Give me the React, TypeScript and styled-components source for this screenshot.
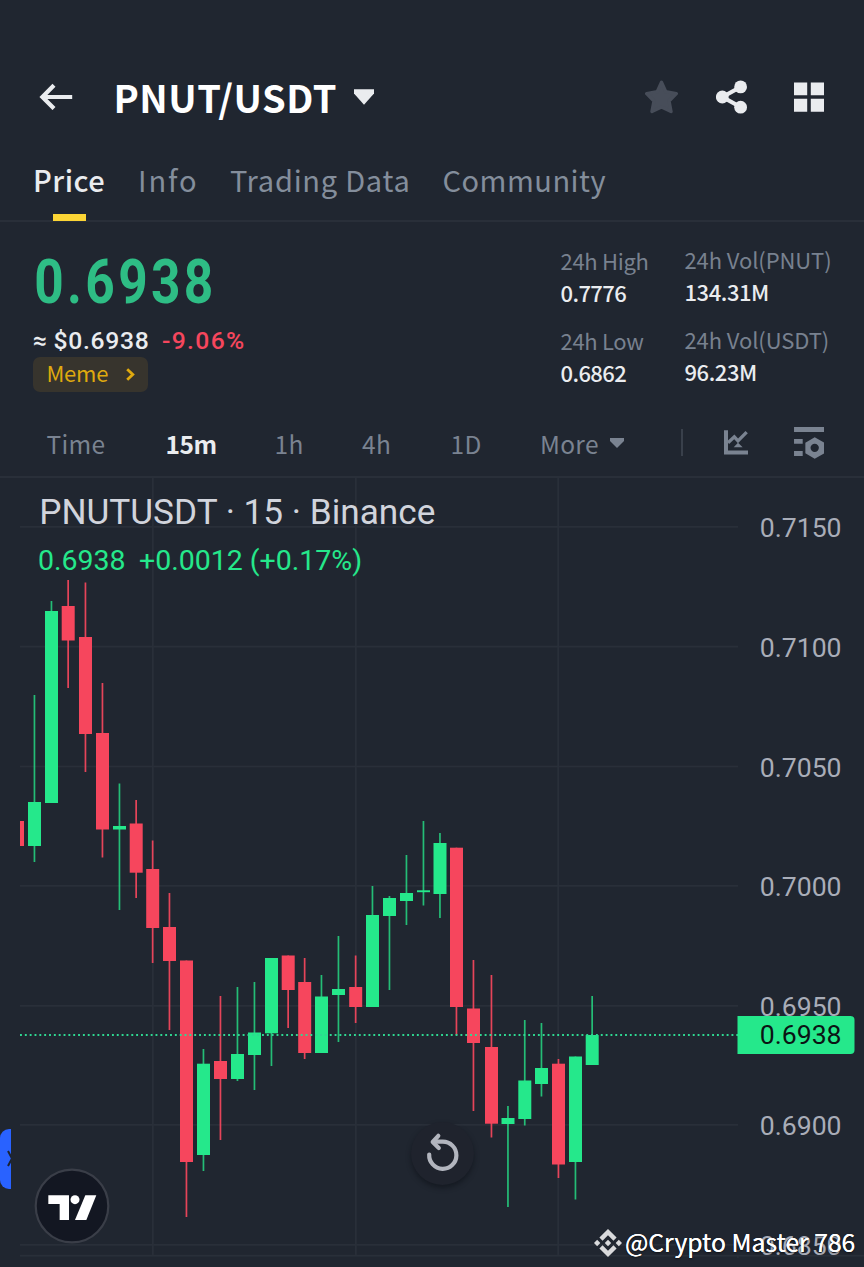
import React from 'react';
import styled, { createGlobalStyle } from 'styled-components';

const c = {
  bg: '#202630',
  line: '#292f39',
  text: '#eaecef',
  muted: '#848e9c',
  dim: '#7a8391',
  green: '#25e88b',
  red: '#f6465d',
};

const GlobalStyle = createGlobalStyle`
  * { box-sizing: border-box; }
  body { margin: 0; background: ${c.bg}; }
`;

const Page = styled.div`
  width: 864px;
  height: 1267px;
  overflow: hidden;
  position: relative;
  display: flex;
  flex-direction: column;
  background: ${c.bg};
  color: ${c.text};
  font-family: 'Noto Sans CJK SC', 'Noto Sans', sans-serif;
  white-space: nowrap;
  svg { display: block; flex: none; }
`;

const Header = styled.header`
  height: 132px;
  padding: 60px 40px 0 39px;
  display: flex;
  align-items: center;
`;

const Pair = styled.h1`
  margin: 0 0 0 40.5px;
  padding-top: 2px;
  width: 240.5px;
  font-size: 38px;
  line-height: 50px;
  font-weight: 700;
  letter-spacing: 0.5px;
  color: #fff;
`;

const Caret = styled.span`
  padding-top: 2px;
`;

const Actions = styled.div`
  margin-left: auto;
  display: flex;
  align-items: center;
  padding-top: 2px;
`;

const ActionIcon = styled.span<{ $after?: number }>`
  margin-right: ${(p) => p.$after ?? 0}px;
`;

const Tabs = styled.nav`
  height: 90px;
  padding: 27px 0 0 33px;
  display: grid;
  grid-template-columns: 105px 92px 212.5px auto;
  border-bottom: 2px solid ${c.line};
`;

const Tab = styled.span<{ $active?: boolean; $spacing?: number }>`
  position: relative;
  font-size: 29px;
  line-height: 40px;
  letter-spacing: ${(p) => p.$spacing ?? 0.5}px;
  font-weight: ${(p) => (p.$active ? 500 : 400)};
  color: ${(p) => (p.$active ? c.text : c.muted)};
  &::after {
    content: '';
    display: ${(p) => (p.$active ? 'block' : 'none')};
    position: absolute;
    left: 20px;
    bottom: -1px;
    width: 33px;
    height: 7px;
    background: #fcd535;
  }
`;

const Summary = styled.section`
  height: 186px;
  padding: 24px 0 0 33px;
  display: grid;
  grid-template-columns: 527.5px 124px auto;
`;

const PriceBlock = styled.div`
  display: flex;
  flex-direction: column;
  align-items: flex-start;
`;

const LastPrice = styled.div`
  padding: 7px 0 0 1.5px;
  height: 60px;
  font-family: Roboto, sans-serif;
  font-size: 60.5px;
  line-height: 60px;
  font-weight: 700;
  letter-spacing: 3.9px;
  transform: scaleX(0.85);
  transform-origin: 0 50%;
  color: #2ebd85;
`;

const Approx = styled.div`
  margin-top: 20px;
  display: flex;
  font-family: Roboto, sans-serif;
  font-size: 24.7px;
  line-height: 30px;
  font-weight: 500;
  letter-spacing: 0.7px;
`;

const Sign = styled.span`
  width: 20.5px;
`;

const FiatPrice = styled.span`
  width: 108.5px;
`;

const Change = styled.span`
  color: ${c.red};
  letter-spacing: 1.35px;
`;

const Tag = styled.div`
  margin-top: 1px;
  width: 115px;
  height: 35px;
  padding: 0 13px 5px 13.5px;
  display: flex;
  align-items: center;
  justify-content: space-between;
  border-radius: 7px;
  background: #37342d;
  color: #dfa90f;
  font-size: 22px;
  line-height: 30px;
  letter-spacing: -0.25px;
  svg { margin-top: 4px; }
`;

const StatColumn = styled.div<{ $lift: number }>`
  margin-top: -${(p) => p.$lift}px;
  display: flex;
  flex-direction: column;
  gap: 17px;
`;

const Stat = styled.div`
  display: flex;
  flex-direction: column;
  font-size: 22px;
`;

const StatLabel = styled.span<{ $spacing?: number }>`
  line-height: 31px;
  color: #78818f;
  letter-spacing: ${(p) => p.$spacing ?? -0.1}px;
`;

const StatValue = styled.span`
  padding-top: 1px;
  line-height: 31px;
  color: ${c.text};
  font-weight: 500;
  letter-spacing: -0.6px;
`;

const WideStatValue = styled(StatValue)`
  letter-spacing: -0.45px;
`;

const Toolbar = styled.div`
  height: 70px;
  padding: 1px 40px 0 46.5px;
  display: flex;
  align-items: center;
  border-bottom: 2px solid ${c.line};
`;

const Interval = styled.span<{ $w: number; $active?: boolean }>`
  width: ${(p) => p.$w}px;
  padding-top: 2px;
  font-size: 24.5px;
  line-height: 34px;
  letter-spacing: ${(p) => (p.$active ? -0.5 : 0.3)}px;
  font-weight: ${(p) => (p.$active ? 700 : 400)};
  color: ${(p) => (p.$active ? c.text : c.dim)};
`;

const Separator = styled.span`
  width: 2px;
  height: 27px;
  margin: 0 41px 0 57px;
  background: #39404b;
`;

const ToolGap = styled.span`
  flex: 1;
`;

const ChartArea = styled.main`
  height: 789px;
  font-family: Roboto, sans-serif;
`;

const Handle = styled.button`
  position: absolute;
  left: 0;
  top: 1129px;
  width: 11px;
  height: 60px;
  padding: 0;
  border: 0;
  overflow: hidden;
  border-radius: 9px 0 0 9px;
  background: #2962ff;
`;

const ResetButton = styled.button`
  position: absolute;
  left: 411px;
  top: 1122px;
  width: 63px;
  height: 63px;
  padding: 0;
  border: 0;
  border-radius: 50%;
  background: #1f232d;
  box-shadow: 0 3px 5px rgba(10, 13, 20, 0.5);
`;

const Brand = styled.div`
  position: absolute;
  left: 34px;
  top: 1168px;
`;

const Watermark = styled.div`
  position: absolute;
  left: 594px;
  top: 1224px;
  display: flex;
  align-items: center;
  gap: 3px;
  font-size: 24.7px;
  line-height: 34px;
  color: #fff;
  text-shadow: 0 0 0.6px #fff, 0 1px 2px rgba(0, 0, 0, 0.6);
  svg { margin-top: 3px; }
`;

type Candle = [x: number, up: 0 | 1, top: number, bottom: number, high: number, low: number];

const candles: Candle[] = [
  [28, 1, 802, 846, 695, 862],
  [45, 1, 611, 803, 601, 803],
  [61.7, 0, 606, 640.5, 580, 688],
  [79, 0, 637, 734, 582.5, 772],
  [96, 0, 733, 829.5, 683, 857.5],
  [113, 1, 826, 829.5, 783.5, 910],
  [129.7, 0, 823.5, 872.7, 800, 898],
  [146.2, 0, 869, 928, 840.5, 963],
  [163, 0, 927, 961, 893, 1030],
  [180, 0, 960.5, 1162, 960.5, 1217],
  [197, 1, 1063.7, 1155, 1049, 1171],
  [214, 0, 1061, 1079, 996, 1140],
  [231, 1, 1054, 1079, 987, 1081],
  [248, 1, 1032.5, 1055, 982, 1090],
  [265, 1, 958, 1033.3, 958, 1066],
  [281.7, 0, 955.5, 990, 955.5, 1028],
  [298.2, 0, 982, 1053, 958, 1059],
  [315, 1, 996.5, 1053, 975, 1053],
  [332, 1, 989, 995, 936, 1042],
  [349.2, 0, 987, 1007, 955.5, 1023],
  [366, 1, 915, 1007, 886, 1007],
  [383, 1, 898, 916, 896, 990],
  [400, 1, 893, 901, 855, 925],
  [417, 1, 890.3, 892.2, 821, 905.5],
  [433.5, 1, 843, 894, 833, 918],
  [450, 0, 847.7, 1007, 847.7, 1035],
  [467, 0, 1008.5, 1043, 960, 1111],
  [485, 0, 1047, 1123.7, 975, 1137.5],
  [501.5, 1, 1118, 1124, 1106, 1207],
  [518.3, 1, 1080.5, 1119, 1020, 1125.5],
  [535, 1, 1068, 1084, 1023, 1096.5],
  [552, 0, 1063.7, 1164.5, 1059, 1178],
  [569, 1, 1056.5, 1162, 1056.5, 1199.5],
  [585.7, 1, 1035, 1065, 996, 1065],
];

const levels: [string, number][] = [
  ['0.7150', 527],
  ['0.7100', 646.7],
  ['0.7050', 766.6],
  ['0.7000', 886],
  ['0.6950', 1006],
  ['0.6900', 1125],
  ['0.6850', 1245],
];

const PriceChart = () => (
  <svg width="864" height="789" viewBox="0 478 864 789">
    <g fill={c.line}>
      {levels.map(([label, y]) => (
        <rect key={label} x="20" y={y - 1} width="718" height="1.8" />
      ))}
      {[152, 355, 557.3].map((x) => (
        <rect key={x} x={x} y="478" width="1.8" height="777" />
      ))}
      <rect x="20" y="1254.8" width="844" height="1.8" />
      <rect x="737" y="1254.8" width="1.8" height="3" />
    </g>
    <rect x="20" y="821" width="4" height="25" fill={c.red} />
    {candles.map(([x, up, top, bottom, high, low]) => (
      <g key={x} fill={up ? c.green : c.red}>
        <rect x={x + 5.6} y={high} width="1.7" height={low - high} opacity={up ? 0.78 : 0.92} />
        <rect x={x} y={top} width="13" height={bottom - top} />
      </g>
    ))}
    <line x1="20" x2="738" y1="1035" y2="1035" stroke="#2fd892" strokeWidth="1.8" strokeDasharray="1.9 2.94" />
    <g fontSize="35.2" fill="#d1d4dc">
      <text x="39.2" y="524">PNUTUSDT · 15 · Binance</text>
    </g>
    <g fontSize="28.5" fill={c.green}>
      <text x="37.9" y="570">0.6938</text>
      <text x="139" y="570">+0.0012 (+0.17%)</text>
    </g>
    <g fontSize="26.6" fill="#a9adb8">
      {levels.map(([label, y]) => (
        <text key={label} x="759.8" y={y + 10}>{label}</text>
      ))}
    </g>
    <path d="M737.5 1016H850.5Q854.5 1016 854.5 1020V1050Q854.5 1054 850.5 1054H737.5Z" fill={c.green} />
    <text x="759.8" y="1044" fontSize="26.6" fill="#0b1414">0.6938</text>
  </svg>
);

const App = () => (
  <Page>
    <GlobalStyle />
    <Header>
      <svg width="34" height="28" viewBox="0 0 34 28" fill="none" stroke={c.text} strokeWidth="4.2">
        <path d="M33.2 15H3.5M15 3.2L3.4 15L15 26.6" />
      </svg>
      <Pair>PNUT/USDT</Pair>
      <Caret>
        <svg width="20" height="16" viewBox="0 0 60 47" fill={c.text}>
          <path d="M0 0H60V13L30 47L0 13Z" />
        </svg>
      </Caret>
      <Actions>
        <ActionIcon $after={38}>
          <svg width="33" height="34" viewBox="0 0 100 102" fill="#474d59" stroke="#474d59" strokeWidth="10" strokeLinejoin="round">
            <path d="M50 6L63 35L95 41L73 63L79 95L50 81L21 95L27 63L5 41L37 35Z" />
          </svg>
        </ActionIcon>
        <ActionIcon $after={46}>
          <svg width="32" height="34" viewBox="0 0 32 34" fill={c.text} stroke={c.text}>
            <path d="M24.5 7L6.5 17L24.5 27" fill="none" strokeWidth="4.2" />
            <g stroke="none">
              <circle cx="6.3" cy="17" r="6.4" />
              <circle cx="24.6" cy="6.9" r="6.4" />
              <circle cx="24.6" cy="27.2" r="6.4" />
            </g>
          </svg>
        </ActionIcon>
        <ActionIcon>
          <svg width="30" height="30" viewBox="0 0 30 30" fill={c.text}>
            <path d="M0 0.4H13.2V13.2H0ZM16.8 0.4H30V13.2H16.8ZM0 16.8H13.2V29.8H0ZM16.8 16.8H30V29.8H16.8Z" />
          </svg>
        </ActionIcon>
      </Actions>
    </Header>

    <Tabs>
      <Tab $active>Price</Tab>
      <Tab $spacing={1.9}>Info</Tab>
      <Tab $spacing={0.75}>Trading Data</Tab>
      <Tab>Community</Tab>
    </Tabs>

    <Summary>
      <PriceBlock>
        <LastPrice>0.6938</LastPrice>
        <Approx>
          <Sign>≈</Sign>
          <FiatPrice>$0.6938</FiatPrice>
          <Change>-9.06%</Change>
        </Approx>
        <Tag>
          Meme
          <svg width="9" height="13" viewBox="0 0 9 13" fill="none" stroke="#dfa90f" strokeWidth="2.8">
            <path d="M1.2 1.2L6.8 6.5L1.2 11.8" />
          </svg>
        </Tag>
      </PriceBlock>
      <StatColumn $lift={1}>
        <Stat>
          <StatLabel $spacing={-0.3}>24h High</StatLabel>
          <StatValue>0.7776</StatValue>
        </Stat>
        <Stat>
          <StatLabel $spacing={-0.3}>24h Low</StatLabel>
          <StatValue>0.6862</StatValue>
        </Stat>
      </StatColumn>
      <StatColumn $lift={2}>
        <Stat>
          <StatLabel>24h Vol(PNUT)</StatLabel>
          <WideStatValue>134.31M</WideStatValue>
        </Stat>
        <Stat>
          <StatLabel>24h Vol(USDT)</StatLabel>
          <WideStatValue>96.23M</WideStatValue>
        </Stat>
      </StatColumn>
    </Summary>

    <Toolbar>
      <Interval $w={119}>Time</Interval>
      <Interval $w={109} $active>15m</Interval>
      <Interval $w={87.5}>1h</Interval>
      <Interval $w={88.5}>4h</Interval>
      <Interval $w={89.5}>1D</Interval>
      <Interval $w={69.5}>More</Interval>
      <svg width="14" height="10" viewBox="0 0 42 30" fill={c.dim}>
        <path d="M0 0H42V9L21 30L0 9Z" />
      </svg>
      <Separator />
      <svg width="24" height="25" viewBox="0 0 72 74">
        <path d="M0 0H12V61H72V73H0Z" fill={c.dim} />
        <path d="M12 38L31 20L42 32L68 6" fill="none" stroke={c.dim} strokeWidth="10" />
        <path d="M29 51L42 38L56 51Z" fill={c.dim} />
      </svg>
      <ToolGap />
      <svg width="30.4" height="32" viewBox="0 0 91 96" fill={c.dim}>
        <path d="M0 0H91V15H0ZM0 36H26V50H0ZM0 72H26V87H0Z" />
        <path fillRule="evenodd" d="M62 31L91 47V79L62 95L34 79V47ZM62 50A12.5 12.5 0 1 0 62 75A12.5 12.5 0 1 0 62 50Z" />
      </svg>
    </Toolbar>

    <ChartArea>
      <PriceChart />
    </ChartArea>

    <Handle aria-label="Expand">
      <svg width="16" height="60" viewBox="0 0 16 60" fill="none" stroke="#1b2230" strokeWidth="2">
        <path d="M8 22L12 29.5L8 37" />
      </svg>
    </Handle>
    <ResetButton aria-label="Reset">
      <svg width="63" height="63" viewBox="411 1122 63 63" fill="none" stroke="#b2b5be" strokeWidth="4.2" strokeLinecap="round" strokeLinejoin="round">
        <path d="M429.2 1154.5A13.6 13.6 0 1 0 442.7 1141.6H434" />
        <path d="M438.3 1135.8L432.7 1142L438.8 1148" />
      </svg>
    </ResetButton>
    <Brand>
      <svg width="76" height="76" viewBox="34 1168 76 76">
        <circle cx="72" cy="1206" r="36.3" fill="#131722" stroke="#3a3e48" strokeWidth="2.2" />
        <g transform="translate(0 1100) scale(0.3333)" fill="#fff">
          <path d="M145 286H207V360H179V312H145Z" />
          <circle cx="225" cy="299" r="13.5" />
          <path d="M256 286H289L259 360H225Z" />
        </g>
      </svg>
    </Brand>
    <Watermark>
      <svg width="28" height="28" viewBox="0 0 126.61 126.61" fill="#d9dadc">
        <path d="M38.73 53.2L63.3 28.63L87.88 53.21L102.18 38.91L63.3 0L24.43 38.9Z" />
        <path d="M0 63.3L14.3 49L28.6 63.3L14.3 77.6Z" />
        <path d="M38.73 73.41L63.3 97.98L87.88 73.4L102.18 87.69L63.3 126.61L24.43 87.71Z" />
        <path d="M98.01 63.31L112.31 49.01L126.61 63.3L112.31 77.61Z" />
        <path d="M77.83 63.3L63.3 48.8L48.8 63.3L63.3 77.83Z" />
      </svg>
      @Crypto Master 786
    </Watermark>
  </Page>
);

export default App;
